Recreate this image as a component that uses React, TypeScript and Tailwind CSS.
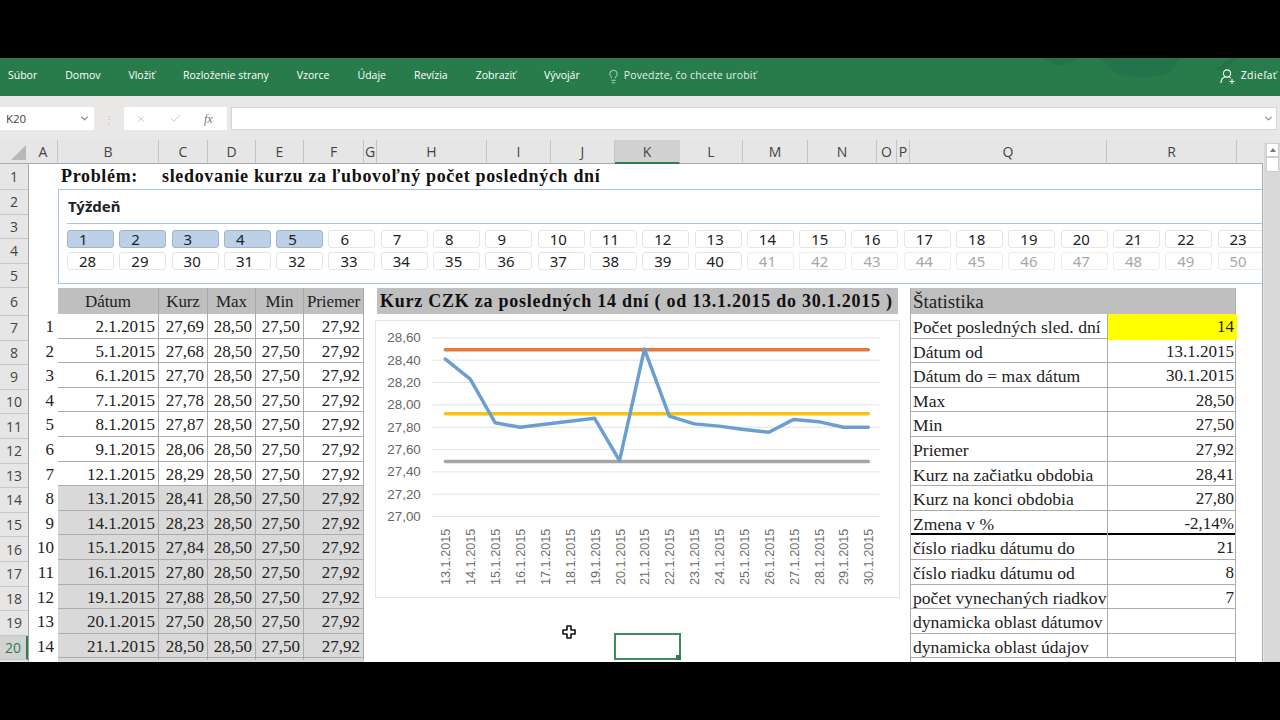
import { Check, ChevronDown, Lightbulb, X } from "lucide-react";

const tabs = ["Súbor", "Domov", "Vložiť", "Rozloženie strany", "Vzorce", "Údaje", "Revízia", "Zobraziť", "Vývojár"];

const columns = [
  { name: "A", width: "w-[29px]" },
  { name: "B", width: "w-[101px]" },
  { name: "C", width: "w-[49px]" },
  { name: "D", width: "w-[48px]" },
  { name: "E", width: "w-[48px]" },
  { name: "F", width: "w-[60px]" },
  { name: "G", width: "w-[13px]" },
  { name: "H", width: "w-[110px]" },
  { name: "I", width: "w-[64px]" },
  { name: "J", width: "w-[64px]" },
  { name: "K", width: "w-[65px]" },
  { name: "L", width: "w-[63px]" },
  { name: "M", width: "w-[65px]" },
  { name: "N", width: "w-[69px]" },
  { name: "O", width: "w-[20px]" },
  { name: "P", width: "w-[13px]" },
  { name: "Q", width: "w-[197px]" },
  { name: "R", width: "w-[130px]" },
];

const rates = [
  ["2.1.2015", "27,69"],
  ["5.1.2015", "27,68"],
  ["6.1.2015", "27,70"],
  ["7.1.2015", "27,78"],
  ["8.1.2015", "27,87"],
  ["9.1.2015", "28,06"],
  ["12.1.2015", "28,29"],
  ["13.1.2015", "28,41"],
  ["14.1.2015", "28,23"],
  ["15.1.2015", "27,84"],
  ["16.1.2015", "27,80"],
  ["19.1.2015", "27,88"],
  ["20.1.2015", "27,50"],
  ["21.1.2015", "28,50"],
];

const stats = [
  ["Počet posledných sled. dní", "14"],
  ["Dátum od", "13.1.2015"],
  ["Dátum do = max dátum", "30.1.2015"],
  ["Max", "28,50"],
  ["Min", "27,50"],
  ["Priemer", "27,92"],
  ["Kurz na začiatku obdobia", "28,41"],
  ["Kurz na konci obdobia", "27,80"],
  ["Zmena v %", "-2,14%"],
  ["číslo riadku dátumu do", "21"],
  ["číslo riadku dátumu od", "8"],
  ["počet vynechaných riadkov", "7"],
  ["dynamicka oblast dátumov", ""],
  ["dynamicka oblast údajov", ""],
];

const series = [28.41, 28.23, 27.84, 27.8, 27.827, 27.853, 27.88, 27.5, 28.5, 27.9, 27.83, 27.81, 27.78, 27.755, 27.87, 27.85, 27.8, 27.8];
const axis = ["28,60", "28,40", "28,20", "28,00", "27,80", "27,60", "27,40", "27,20", "27,00"];

const xAt = (i: number) => 444 + i * 25.06;
const yAt = (v: number) => 337 + ((28.6 - v) / 0.2) * 22.5;

const WeekButton = ({ n, muted, active }: { n: number; muted?: boolean; active?: boolean }) => (
  <div
    className={`w-[47px] h-[18px] shrink-0 rounded-[3px] border flex items-center pl-[11px] text-[15px] ${
      active
        ? "bg-[#bcd0e8] border-[#a3b5ca] text-[#222]"
        : muted
          ? "bg-white border-[#ececec] text-[#a8a8a8]"
          : "bg-white border-[#e6e6e6] text-[#222]"
    }`}
  >
    {n}
  </div>
);

const Chart = () => (
  <svg viewBox="375 320 525 278" className="block w-[525px] h-[278px] border border-[#e4e4e4] bg-white">
    {axis.map((label, i) => {
      const y = 337 + i * 22.5;
      return (
        <g key={label}>
          <line x1={431} x2={881} y1={y} y2={y} stroke="#e2e2e2" strokeWidth={1} />
          <text x={385.5} y={y + 4.5} fontSize={13.5} fill="#666" fontFamily="Liberation Sans">
            {label}
          </text>
        </g>
      );
    })}
    <line x1={444} x2={870} y1={349} y2={349} stroke="#e07b39" strokeWidth={3.5} strokeLinecap="round" />
    <line x1={444} x2={870} y1={413.5} y2={413.5} stroke="#fcc10a" strokeWidth={3.5} strokeLinecap="round" />
    <line x1={444} x2={870} y1={461.5} y2={461.5} stroke="#a5a5a5" strokeWidth={3.5} strokeLinecap="round" />
    <polyline
      points={series.map((v, i) => `${xAt(i)},${yAt(v)}`).join(" ")}
      fill="none"
      stroke="#6a9fd0"
      strokeWidth={3.5}
      strokeLinejoin="round"
      strokeLinecap="round"
    />
    {series.map((_, i) => (
      <text
        key={i}
        transform={`translate(${xAt(i) + 5} 586) rotate(-90)`}
        fontSize={12.8}
        fill="#6e6e6e"
        fontFamily="Liberation Sans"
      >
        {`${13 + i}.1.2015`}
      </text>
    ))}
  </svg>
);

export default function App() {
  return (
    <div className="relative w-[1280px] h-[720px] bg-black py-[58px] overflow-hidden">
      <div className="h-[604px] flex flex-col bg-white overflow-hidden">
        {/* ribbon */}
        <div className="relative h-[38px] shrink-0 bg-[#287c4b] flex items-center pl-[8px] pr-[3px] pb-[2px] text-white font-['Open_Sans',sans-serif] text-[10.5px] overflow-hidden">
          <svg className="absolute left-[1000px] top-0 w-[240px] h-[20px]" viewBox="0 0 240 20" fill="#24734a">
            <path d="M45 0c5 9 25 9 32 0z" />
            <path d="M100 0l14 14q10 5 30 5t28-7l8-12z" />
            <path d="M215 12l16-12h6l-12 14z" />
          </svg>
          <div className="relative flex items-center gap-[28px]">
            {tabs.map((t) => (
              <span key={t}>{t}</span>
            ))}
            <span className="-ml-[2px] flex items-center gap-[3px] tracking-[0.15px] text-[#e3efe7]">
              <Lightbulb size={15} strokeWidth={1.2} />
              Povedzte, čo chcete urobiť
            </span>
          </div>
          <div className="relative ml-auto flex items-center gap-[6px]">
            <svg width="15" height="15" viewBox="0 0 15 15" fill="none" stroke="#fff" strokeWidth={1.1}>
              <circle cx="7" cy="4.5" r="3.6" />
              <path d="M1 14c0-3.6 2-5.6 4.2-6.2M8.8 8c.7.2 1.3.5 1.8 1M9.5 12.5h5M12 10v5" />
            </svg>
            <span className="tracking-[0.45px]">Zdieľať</span>
          </div>
        </div>

        {/* formula bar */}
        <div className="h-[44px] shrink-0 bg-[#e9e8e6] flex items-center pt-[1px] font-['Open_Sans',sans-serif]">
          <div className="w-[94px] h-[23px] bg-white flex items-center justify-between pl-[6px] pr-[4px] text-[11.5px] text-[#444]">
            K20
            <ChevronDown size={11} strokeWidth={3} className="text-[#888]" />
          </div>
          <div className="w-[30px] flex justify-center text-[#bbb] text-[10px] leading-none">⋮</div>
          <div className="w-[103px] h-[23px] bg-white flex items-center gap-[22px] pl-[11px] text-[#c4c4c4]">
            <X size={12} strokeWidth={1.6} />
            <Check size={13} strokeWidth={1.6} />
            <span className="font-['Liberation_Serif',serif] italic text-[12px] text-[#777]">fx</span>
          </div>
          <div className="ml-[4px] w-[1046px] h-[23px] bg-white border border-[#d4d4d4] flex items-center justify-end pr-[2px]">
            <ChevronDown size={11} strokeWidth={2.5} className="text-[#888]" />
          </div>
        </div>

        {/* column headers */}
        <div className="h-[24px] shrink-0 bg-[#e6e6e6] flex font-['Open_Sans',sans-serif] text-[14px] text-[#444]">
          <div className="w-[29px] shrink-0 border-b border-[#a8a8a8] flex items-end justify-end p-[3px]">
            <div className="w-0 h-0 border-l-[15px] border-l-transparent border-b-[15px] border-b-[#b9b9b9]" />
          </div>
          {columns.map((c) => (
            <div
              key={c.name}
              className={`${c.width} shrink-0 flex items-center justify-center border-r ${
                c.name === "K"
                  ? "bg-[#d2d2d2] border-r-[#d2d2d2] border-b-2 border-b-[#2f7d4f]"
                  : "border-r-[#c4c4c4] border-b border-b-[#a8a8a8]"
              }`}
            >
              {c.name}
            </div>
          ))}
          <div className="flex-1 border-b border-[#a8a8a8]" />
        </div>

        {/* sheet */}
        <div className="flex-1 flex min-h-0">
          <div className="w-[29px] shrink-0 bg-[#e6e6e6] border-r border-[#a8a8a8] font-['Open_Sans',sans-serif] text-[14px] text-[#444]">
            {Array.from({ length: 20 }, (_, i) => i + 1).map((n) => (
              <div
                key={n}
                className={`flex items-center justify-center border-b border-[#c8c8c8] ${
                  n === 1 ? "h-[26px]" : n === 6 ? "h-[28px]" : n < 6 ? "h-[24.5px]" : "h-[24.6px]"
                } ${n === 20 ? "bg-[#d2d2d2] text-[#2f7d4f] border-r-2 border-r-[#2f7d4f]" : ""}`}
              >
                {n}
              </div>
            ))}
          </div>

          <div className="w-[1234px] shrink-0 border-r border-[#a8a8a8] font-['Liberation_Serif',serif] text-[17px] text-[#222] overflow-hidden">
            <div className="h-[25px] flex items-center pl-[32px] font-bold text-[18px] tracking-[0.67px] text-[#111]">
              <span className="w-[101px]">Problém:</span>
              <span>sledovanie kurzu za ľubovoľný počet posledných dní</span>
            </div>

            {/* slicer */}
            <div className="ml-[29px] h-[95px] border-y border-l border-[#a9c6e0] pl-[8px] overflow-hidden font-['Noto_Sans',sans-serif]">
              <div className="pl-[1px] h-[33px] flex items-center border-b border-[#a9c6e0] box-content">
                <span className="text-[15px] font-bold text-[#222]">Týždeň</span>
              </div>
              <div className="flex gap-[5.3px] mt-[6px]">
                {Array.from({ length: 23 }, (_, i) => i + 1).map((n) => (
                  <WeekButton key={n} n={n} active={n <= 5} />
                ))}
              </div>
              <div className="flex gap-[5.3px] mt-[4px]">
                {Array.from({ length: 23 }, (_, i) => i + 28).map((n) => (
                  <WeekButton key={n} n={n} muted={n > 40} />
                ))}
              </div>
            </div>

            <div className="flex mt-[4px]">
              {/* rate table */}
              <div className="w-[335px] shrink-0">
                <div className="ml-[29px] h-[26px] grid grid-cols-[101px_49px_48px_48px_60px] bg-[#bfbfbf] text-center leading-[27px]">
                  {["Dátum", "Kurz", "Max", "Min", "Priemer"].map((h) => (
                    <div key={h} className="border-r border-[#a9a9a9] tracking-[-0.1px]">
                      {h}
                    </div>
                  ))}
                </div>
                {rates.map(([date, rate], i) => (
                  <div key={date} className="flex h-[24.6px] leading-[26px]">
                    <div className="w-[29px] pr-[4px] text-right">{i + 1}</div>
                    <div
                      className={`grid grid-cols-[101px_49px_48px_48px_60px] text-right border-b border-[#ababab] ${
                        i >= 7 ? "bg-[#d9d9d9]" : "bg-white"
                      }`}
                    >
                      {[date, rate, "28,50", "27,50", "27,92"].map((v, j) => (
                        <div key={j} className="border-r border-[#ababab] pr-[3px]">
                          {v}
                        </div>
                      ))}
                    </div>
                  </div>
                ))}
                {/* sliver of the next row at the window edge */}
                <div className="ml-[29px] w-[306px] h-[4px] bg-[#d9d9d9]" />
              </div>

              {/* chart */}
              <div className="ml-[11px] w-[525px] shrink-0">
                <div className="mx-[2px] h-[26px] bg-[#bfbfbf] px-[3px] whitespace-nowrap font-bold text-[18px] leading-[26px] tracking-[0.75px] text-[#111]">
                  Kurz CZK za posledných 14 dní ( od 13.1.2015 do 30.1.2015 )
                </div>
                <div className="mt-[6px]">
                  <Chart />
                </div>
              </div>

              {/* stats */}
              <div className="ml-[10px] w-[326px] shrink-0 border-x border-[#ababab] -mx-[1px]">
                <div className="h-[26px] bg-[#bfbfbf] pl-[2px] text-[19px] leading-[27px]">Štatistika</div>
                {stats.map(([label, value], i) => (
                  <div
                    key={label}
                    className={`grid grid-cols-[197px_129px] h-[24.6px] leading-[26px] border-b ${
                      i === 8 ? "border-b-2 border-b-black" : "border-b-[#ababab]"
                    }`}
                  >
                    <div className="border-r border-[#ababab] pl-[2px] whitespace-nowrap overflow-hidden text-[17.6px]">
                      {label}
                    </div>
                    <div className={`text-right pr-[3px] ${i === 0 ? "bg-[#ffff00]" : ""}`}>{value}</div>
                  </div>
                ))}
              </div>
            </div>
          </div>

          {/* scrollbar */}
          <div className="flex-1 bg-[#d9d9d9] border-l border-[#e8e8e8] -mt-[21px] z-10 pl-[2px]">
            <div className="w-[13px] h-[14px] bg-white flex items-center justify-center border border-[#cfcfcf]">
              <div className="w-0 h-0 border-x-[3px] border-x-transparent border-b-[4px] border-b-[#777]" />
            </div>
            <div className="w-[13px] h-[15px] bg-white border border-[#cfcfcf]" />
          </div>
        </div>
      </div>

      {/* active cell K20 */}
      <div className="absolute left-[614px] top-[633px] w-[67px] h-[27px] border-2 border-[#3f8a5f]">
        <div className="absolute -right-[2px] -bottom-[2px] w-[5px] h-[5px] bg-[#2f7d4f]" />
      </div>

      {/* mouse pointer */}
      <svg className="absolute left-[562px] top-[625px] w-[14px] h-[14px]" viewBox="0 0 14 14">
        <path d="M5 1h4v4h4v4H9v4H5V9H1V5h4z" fill="#fff" stroke="#111" strokeWidth={1.6} strokeLinejoin="round" />
      </svg>
    </div>
  );
}
